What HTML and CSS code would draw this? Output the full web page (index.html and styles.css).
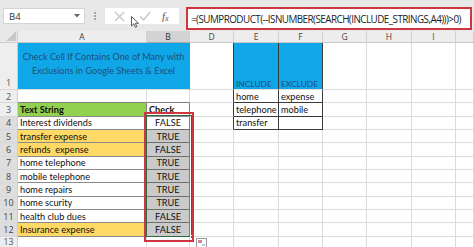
FILE: index.html
```html
<!DOCTYPE html>
<html>
<head>
<meta charset="utf-8">
<link rel="stylesheet" href="styles.css">
</head>
<body>
<div class="app">
  <div class="fbar">
    <div class="namebox"><span class="nb-text">B4</span><svg class="nb-arrow" width="6" height="4" viewBox="0 0 6 4"><path d="M0 0h6L3 3.5z" fill="#666"/></svg></div>
    <div class="sep"><i></i><i></i><i></i></div>
    <div class="btns">
      <svg class="ic-x" width="11" height="11" viewBox="0 0 11 11"><path d="M1 1L10 10M10 1L1 10" stroke="#c4c4c4" stroke-width="1.3"/></svg>
      <svg class="ic-ok" width="12" height="10" viewBox="0 0 12 10"><path d="M1 5.5L4.5 9L11 1" stroke="#c4c4c4" stroke-width="1.3" fill="none"/></svg>
      <span class="fx">f<sub>x</sub></span>
    </div>
    <div class="formula">=(SUMPRODUCT(--ISNUMBER(SEARCH(INCLUDE_STRINGS,A4)))&gt;0)</div>
    <svg class="cursor" width="8" height="12" viewBox="0 0 8 12"><path d="M0.5 0.5V10L2.8 7.8L4.4 11.3L5.8 10.7L4.3 7.3H7.5Z" fill="#fff" stroke="#333" stroke-width="0.8" stroke-linejoin="round"/></svg>
  </div>

  <div class="grid">
    <!-- header row -->
    <div class="corner"><svg width="10" height="10" viewBox="0 0 10 10"><path d="M10 0V10H0Z" fill="#c8c8c8"/></svg></div>
    <div class="ch">A</div><div class="ch sel">B</div><div class="ch">D</div><div class="ch">E</div><div class="ch">F</div><div class="ch">G</div><div class="ch">H</div><div class="ch">I</div><div class="ch"></div>

    <!-- row 1 -->
    <div class="rh r1">1</div>
    <div class="c title">Check Cell If Contains One of Many with<br>Exclusions in Google Sheets &amp; Excel</div>
    <div class="c brd"></div>
    <div class="c bluehd brd">INCLUDE</div>
    <div class="c bluehd brd">EXCLUDE</div>
    <div class="c"></div><div class="c"></div><div class="c"></div><div class="c"></div>

    <!-- row 2 -->
    <div class="rh">2</div>
    <div class="c bbd"></div><div class="c bbd"></div><div class="c brd"></div>
    <div class="c t2">home</div><div class="c t2">expense</div>
    <div class="c"></div><div class="c"></div><div class="c"></div><div class="c"></div>

    <!-- row 3 -->
    <div class="rh">3</div>
    <div class="c ta green b">Text String</div><div class="c ta b">Check</div><div class="c brd"></div>
    <div class="c t2">telephone</div><div class="c t2">mobile</div>
    <div class="c"></div><div class="c"></div><div class="c"></div><div class="c"></div>

    <!-- row 4 -->
    <div class="rh s">4</div>
    <div class="c ta">Interest dividends</div><div class="c ta v act">FALSE</div><div class="c brd"></div>
    <div class="c t2">transfer</div><div class="c t2"></div>
    <div class="c"></div><div class="c"></div><div class="c"></div><div class="c"></div>

    <!-- row 5 -->
    <div class="rh s">5</div>
    <div class="c ta yel">transfer expense</div><div class="c ta v">TRUE</div>
    <div class="c"></div><div class="c"></div><div class="c"></div><div class="c"></div><div class="c"></div><div class="c"></div><div class="c"></div>

    <!-- row 6 -->
    <div class="rh s">6</div>
    <div class="c ta yel">refunds&nbsp; expense</div><div class="c ta v">FALSE</div>
    <div class="c"></div><div class="c"></div><div class="c"></div><div class="c"></div><div class="c"></div><div class="c"></div><div class="c"></div>

    <!-- row 7 -->
    <div class="rh s">7</div>
    <div class="c ta">home telephone</div><div class="c ta v">TRUE</div>
    <div class="c"></div><div class="c"></div><div class="c"></div><div class="c"></div><div class="c"></div><div class="c"></div><div class="c"></div>

    <!-- row 8 -->
    <div class="rh s">8</div>
    <div class="c ta">mobile telephone</div><div class="c ta v">TRUE</div>
    <div class="c"></div><div class="c"></div><div class="c"></div><div class="c"></div><div class="c"></div><div class="c"></div><div class="c"></div>

    <!-- row 9 -->
    <div class="rh s">9</div>
    <div class="c ta">home repairs</div><div class="c ta v">TRUE</div>
    <div class="c"></div><div class="c"></div><div class="c"></div><div class="c"></div><div class="c"></div><div class="c"></div><div class="c"></div>

    <!-- row 10 -->
    <div class="rh s">10</div>
    <div class="c ta">home scurity</div><div class="c ta v">TRUE</div>
    <div class="c"></div><div class="c"></div><div class="c"></div><div class="c"></div><div class="c"></div><div class="c"></div><div class="c"></div>

    <!-- row 11 -->
    <div class="rh s">11</div>
    <div class="c ta">health club dues</div><div class="c ta v">FALSE</div>
    <div class="c"></div><div class="c"></div><div class="c"></div><div class="c"></div><div class="c"></div><div class="c"></div><div class="c"></div>

    <!-- row 12 -->
    <div class="rh s">12</div>
    <div class="c ta yel">Insurance expense</div><div class="c ta v">FALSE</div>
    <div class="c"></div><div class="c"></div><div class="c"></div><div class="c"></div><div class="c"></div><div class="c"></div><div class="c"></div>

    <!-- row 13 -->
    <div class="rh last">13</div>
    <div class="c"></div><div class="c"></div>
    <div class="c"></div><div class="c"></div><div class="c"></div><div class="c"></div><div class="c"></div><div class="c"></div><div class="c"></div>
  </div>

  <div class="selection"><span class="handle"></span></div>
  <div class="redbox"></div>
  <svg class="quick" width="11" height="10" viewBox="0 0 11 10"><rect x="0.5" y="0.5" width="10" height="9" fill="#fff" stroke="#9a9a9a"/><rect x="2" y="2" width="4" height="3" fill="#c98a9a"/><path d="M6 7h3" stroke="#7a9ac0"/></svg>
</div>
</body>
</html>
```

FILE: styles.css
```css
* { box-sizing: border-box; margin: 0; padding: 0; }
html, body { width: 474px; height: 247px; overflow: hidden; background: #fff; }
body { font-family: Lato, "Liberation Sans", sans-serif; color: #111; }

.app { position: relative; width: 474px; height: 247px; overflow: hidden; }

/* formula bar */
.fbar {
  height: 31px;
  background: #e8e8e8;
  display: flex;
  align-items: flex-start;
  padding-top: 8px;
  padding-left: 3px;
}
.namebox {
  width: 82px; height: 16px;
  background: #fff;
  border: 1px solid #d4d4d4;
  display: flex; align-items: center; justify-content: space-between;
  padding: 0 4px 0 5px;
  font-family: "Open Sans", sans-serif;
  font-size: 9.5px; color: #333;
}
.sep {
  width: 20px; height: 16px;
  display: flex; flex-direction: column; align-items: center; justify-content: center; gap: 1.5px;
}
.sep i { display: block; width: 1.5px; height: 1.5px; background: #a8a8a8; }
.btns {
  width: 74px; height: 16px;
  background: #fff;
  display: flex; align-items: center;
  padding-left: 9px;
}
.ic-x { margin-right: 14px; }
.ic-ok { margin-right: 11px; }
.fx {
  font-family: "Liberation Serif", serif; font-style: italic;
  font-size: 11px; color: #555;
}
.fx sub { font-size: 8px; vertical-align: -1px; }
.formula {
  margin-left: 7px;
  margin-top: -1px;
  width: 286px; height: 23px;
  border: 2px solid #d0363f;
  background: #fff;
  font-family: "Open Sans", sans-serif;
  font-size: 9.9px; letter-spacing: -0.55px;
  color: #222;
  padding: 2px 0 0 3px;
  white-space: nowrap;
  line-height: 16px;
}
.cursor { position: absolute; left: 131px; top: 16px; }

/* grid */
.grid {
  display: grid;
  grid-template-columns: 18px 129px 43px 44px 45px 44px 44px 45px 44px 18px;
  grid-template-rows: 12px 47px repeat(12, 13.333px);
  font-size: 9.2px;
}
.corner {
  background: #e9e9e9;
  border-right: 1px solid #cfcfcf; border-bottom: 1px solid #cfcfcf;
  display: flex; align-items: flex-end; justify-content: flex-end;
  padding: 0 1px 1px 0;
}
.ch {
  background: #ededed;
  border-right: 1px solid #d0d0d0; border-bottom: 1px solid #c8c8c8;
  display: flex; align-items: center; justify-content: center;
  font-family: "Open Sans", sans-serif; font-size: 8.5px; color: #444;
}
.ch.sel { background: #d3d3d3; color: #333; border-bottom: 1px solid #a8a8a8; }
.rh {
  background: #eeeeee;
  border-right: 1px solid #cdcdcd; border-bottom: 1px solid #d8d8d8;
  display: flex; align-items: center; justify-content: center;
  font-family: "Open Sans", sans-serif; font-size: 9px; color: #555;
}
.rh.r1 { align-items: flex-end; padding-bottom: 0; }
.rh.s { background: #dedede; color: #444; }
.rh.last { align-items: flex-start; padding-top: 1px; font-size: 8.6px; line-height: 9px; }

.c {
  border-right: 1px solid #dcdcdc; border-bottom: 1px solid #dcdcdc;
  display: flex; align-items: center;
  padding-left: 2px;
  white-space: nowrap;
  line-height: 1;
}
.title {
  grid-column: span 2;
  background: #10a7e8;
  color: #1f4e79;
  justify-content: center; text-align: center;
  line-height: 14px;
  padding: 0 0 4px 0;
  font-size: 9.1px;
  border-right: 1px solid #10a7e8;
}
.bluehd {
  background: #10a7e8; color: #1f4e79;
  align-items: flex-end; padding-bottom: 1px;
  font-size: 8.4px;
}
.brd { border-right-color: #3a3a3a; }
.bbd { border-bottom-color: #7f7f7f; }
.t2 { border-right-color: #3a3a3a; border-bottom-color: #3a3a3a; }
.ta { border-right-color: #7f7f7f; border-bottom-color: #8a8a8a; }
.b { font-weight: bold; }
.green { background: #92d050; }
.yel { background: #ffd966; }
.v { justify-content: center; padding-left: 0; background: #cacaca; border-bottom-color: #6f6f6f; }
.v.act { background: #fff; }

/* overlays */
.selection {
  position: absolute; left: 146px; top: 115px; width: 46px; height: 122px;
  border: 1.5px solid #2a6a45;
}
.handle {
  position: absolute; right: -3px; bottom: -3px; width: 4px; height: 4px;
  background: #2a6a45; border: 1px solid #fff;
}
.redbox {
  position: absolute; left: 144px; top: 112px; width: 50px; height: 130px;
  border: 2px solid #d0363f;
}
.quick { position: absolute; left: 196px; top: 238px; }
```
